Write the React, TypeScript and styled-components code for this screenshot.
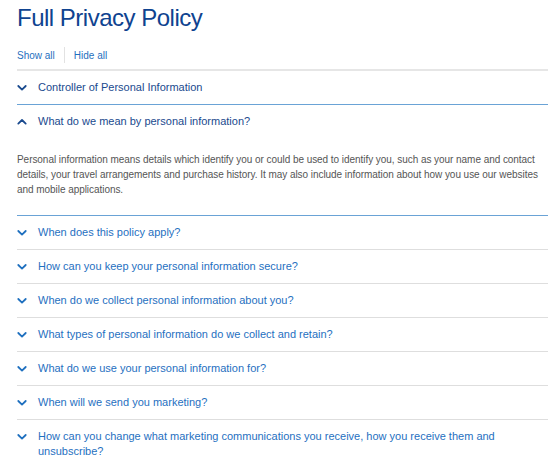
import React, { useState } from 'react'
import styled, { createGlobalStyle } from 'styled-components'

const GlobalStyle = createGlobalStyle`
  body {
    margin: 0;
    background: #fff;
    font-family: "Liberation Sans", Arial, Helvetica, sans-serif;
  }
`

const Page = styled.main`
  padding: 0 8px 0 17px;
`

const Title = styled.h1`
  margin: 0;
  padding-top: 3px;
  font-size: 24px;
  line-height: 30px;
  font-weight: normal;
  letter-spacing: -0.5px;
  color: #0f4390;
`

const Toolbar = styled.div`
  display: flex;
  align-items: center;
  height: 28px;
  margin-top: 8px;
  border-bottom: 2px solid #e6e6e6;
`

const ToolLink = styled.button`
  border: 0;
  background: none;
  padding: 0;
  font: inherit;
  font-size: 10px;
  color: #1f6fbe;
  cursor: pointer;
`

const Divider = styled.span`
  width: 1px;
  height: 16px;
  margin: 0 9px 0 9px;
  background: #e2e2e2;
`

const Item = styled.section<{ $accent: boolean }>`
  border-bottom: 1px solid ${({ $accent }) => ($accent ? '#6aa3d6' : '#dedede')};
`

const Header = styled.button<{ $dark: boolean }>`
  display: flex;
  align-items: flex-start;
  width: 100%;
  border: 0;
  background: none;
  padding: 9px 0;
  text-align: left;
  font: inherit;
  font-size: 11px;
  line-height: 15px;
  color: ${({ $dark }) => ($dark ? '#1a4a8e' : '#1f70bf')};
  cursor: pointer;
`

const Chevron = styled.svg`
  flex: none;
  width: 10px;
  height: 15px;
  margin-right: 11px;
`

const Body = styled.div`
  padding: 14px 0 18px;
  font-size: 10px;
  line-height: 15px;
  letter-spacing: -0.05px;
  color: #555;
`

const items = [
  { title: 'Controller of Personal Information' },
  {
    title: 'What do we mean by personal information?',
    body: 'Personal information means details which identify you or could be used to identify you, such as your name and contact details, your travel arrangements and purchase history. It may also include information about how you use our websites and mobile applications.',
  },
  { title: 'When does this policy apply?' },
  { title: 'How can you keep your personal information secure?' },
  { title: 'When do we collect personal information about you?' },
  { title: 'What types of personal information do we collect and retain?' },
  { title: 'What do we use your personal information for?' },
  { title: 'When will we send you marketing?' },
  { title: 'How can you change what marketing communications you receive, how you receive them and unsubscribe?' },
]

const Arrow = ({ up }: { up: boolean }) => (
  <Chevron viewBox="0 0 10 15">
    <path
      d={up ? 'M1.3 9.6 L5 6 L8.7 9.6' : 'M1.3 6 L5 9.6 L8.7 6'}
      fill="none"
      stroke="currentColor"
      strokeWidth="1.8"
      strokeLinecap="round"
      strokeLinejoin="round"
    />
  </Chevron>
)

export default function App() {
  const [open, setOpen] = useState<number[]>([1])
  const [visited] = useState<number[]>([0])

  const toggle = (i: number) =>
    setOpen(o => (o.includes(i) ? o.filter(x => x !== i) : [...o, i]))

  return (
    <Page>
      <GlobalStyle />
      <Title>Full Privacy Policy</Title>
      <Toolbar>
        <ToolLink onClick={() => setOpen(items.map((_, i) => i))}>Show all</ToolLink>
        <Divider />
        <ToolLink onClick={() => setOpen([])}>Hide all</ToolLink>
      </Toolbar>
      {items.map((item, i) => {
        const isOpen = open.includes(i) && !!item.body
        return (
          <Item key={item.title} $accent={isOpen || open.includes(i + 1)}>
            <Header $dark={isOpen || visited.includes(i)} onClick={() => toggle(i)}>
              <Arrow up={isOpen} />
              <span>{item.title}</span>
            </Header>
            {isOpen && <Body>{item.body}</Body>}
          </Item>
        )
      })}
    </Page>
  )
}
